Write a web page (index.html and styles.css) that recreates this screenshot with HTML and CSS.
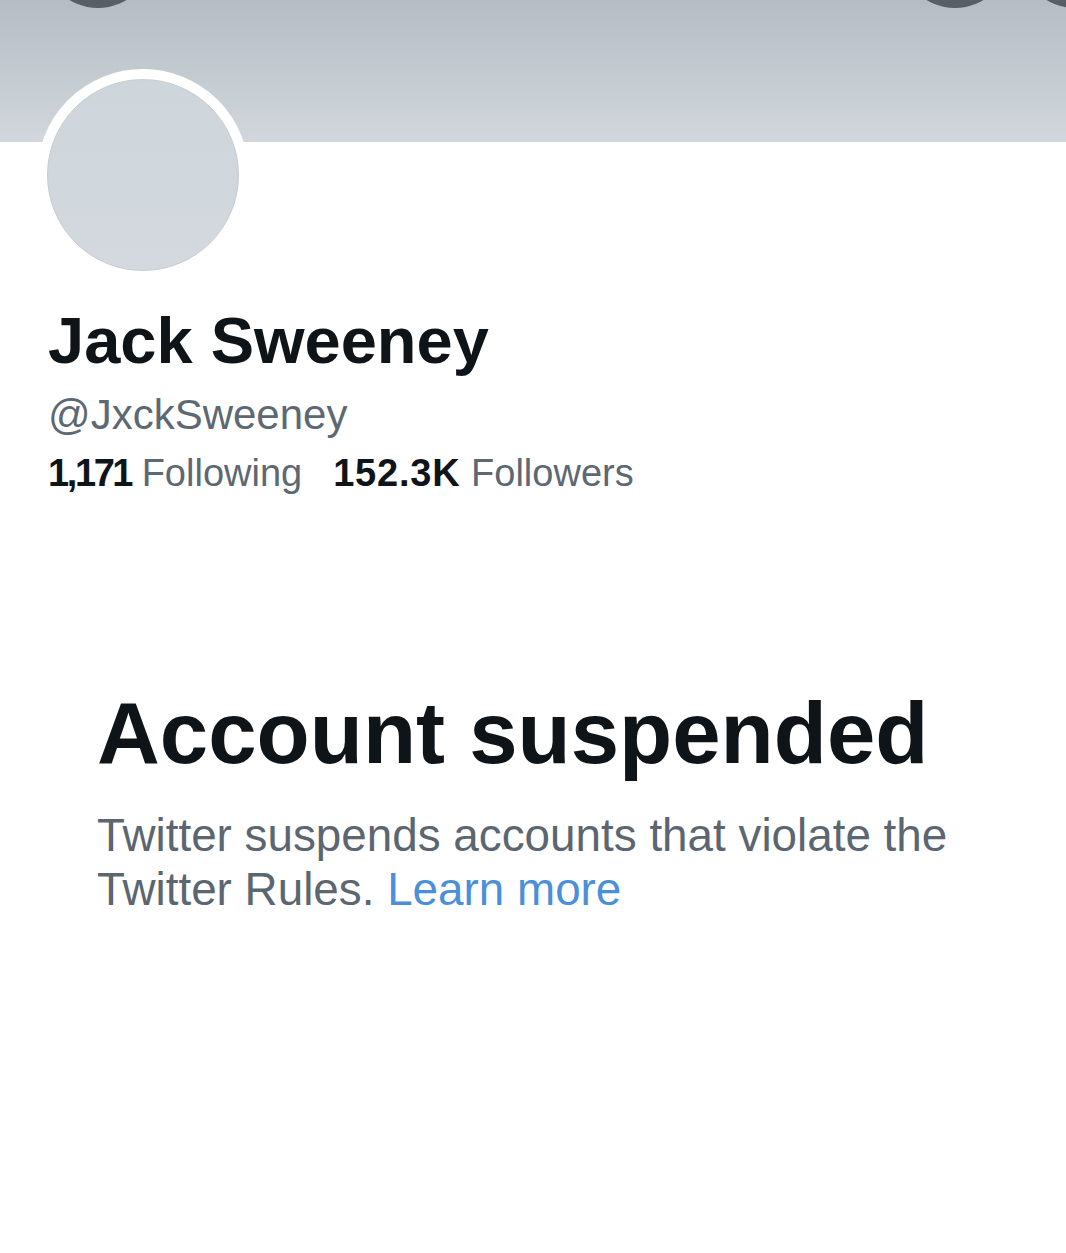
FILE: index.html
```html
<!DOCTYPE html>
<html lang="en">
<head>
<meta charset="utf-8">
<title>Jack Sweeney (@JxckSweeney)</title>
<link rel="stylesheet" href="styles.css">
</head>
<body>
<div class="page">
  <header class="banner">
    <span class="nav-btn nav-back"></span>
    <span class="nav-btn nav-search"></span>
    <span class="nav-btn nav-more"></span>
  </header>
  <section class="profile">
    <div class="avatar-ring"><div class="avatar"></div></div>
    <h1 class="name">Jack Sweeney</h1>
    <div class="handle">@JxckSweeney</div>
    <div class="stats">
      <span class="stat"><b class="num-following">1,171</b> Following</span>
      <span class="stat"><b class="num-followers">152.3K</b> Followers</span>
    </div>
  </section>
  <section class="suspended">
    <h2 class="title">Account suspended</h2>
    <p class="desc">Twitter suspends accounts that violate the Twitter Rules. <a class="link" href="#">Learn more</a></p>
  </section>
</div>
</body>
</html>
```

FILE: styles.css
```css
html, body {
  margin: 0;
  padding: 0;
  background: #ffffff;
}

.page {
  width: 1066px;
  min-height: 1253px;
  font-family: "Liberation Sans", Arial, sans-serif;
  color: #0f1419;
  overflow: hidden;
}

.banner {
  position: relative;
  height: 142px;
  background: linear-gradient(180deg, #b5bdc4 0%, #c4cbd1 55%, #d1d7dc 100%);
  overflow: hidden;
}

.nav-btn {
  position: absolute;
  top: -102px;
  width: 110px;
  height: 110px;
  border-radius: 50%;
  background: #585e63;
}

.nav-back { left: 43px; }
.nav-search { left: 900px; }
.nav-more { left: 1020px; }

.profile {
  display: flex;
  flex-direction: column;
  align-items: flex-start;
  padding-left: 48px;
}

.avatar-ring {
  position: relative;
  z-index: 1;
  margin-top: -73px;
  margin-left: -11px;
  width: 212px;
  height: 212px;
  box-sizing: border-box;
  border: 10px solid #ffffff;
  border-radius: 50%;
  background: #ffffff;
}

.avatar {
  width: 190px;
  height: 190px;
  border-radius: 50%;
  border: 1px solid #c6cdd3;
  background: linear-gradient(180deg, #ced5db 0%, #d3d9de 100%);
}

.name {
  margin: 22px 0 0;
  font-size: 65px;
  line-height: 75px;
  font-weight: 700;
  color: #0f1419;
}

.handle {
  margin-top: 12px;
  font-size: 42px;
  line-height: 50px;
  color: #5d6872;
}

.stats {
  display: flex;
  gap: 31px;
  margin-top: 10px;
  font-size: 38px;
  line-height: 46px;
  color: #5d6872;
}

.stat b {
  color: #0f1419;
  font-weight: 700;
}

.num-following {
  letter-spacing: -2.4px;
}

.num-followers {
  letter-spacing: 0.8px;
}

.suspended {
  padding: 187px 0 0 97px;
}

.title {
  margin: 0;
  font-size: 87px;
  line-height: 100px;
  font-weight: 700;
  color: #0f1419;
}

.desc {
  margin: 26px 0 0;
  max-width: 880px;
  font-size: 45.8px;
  line-height: 54px;
  color: #5b6670;
}

.link {
  color: #4a90d8;
  text-decoration: none;
}
```
